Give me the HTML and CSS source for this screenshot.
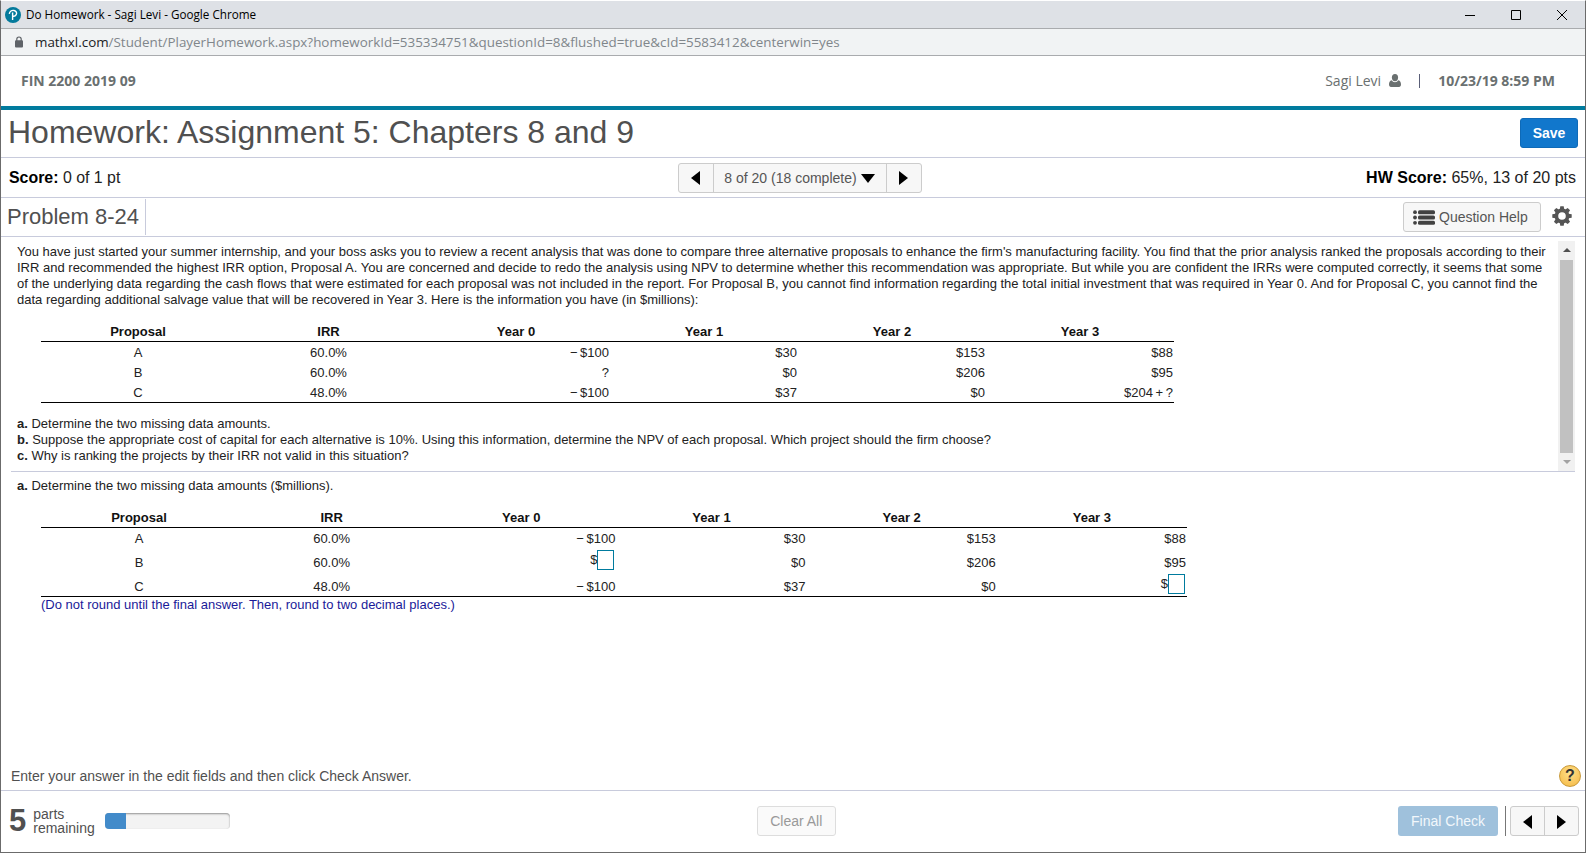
FILE: index.html
```html
<!DOCTYPE html>
<html lang="en">
<head>
  <meta charset="UTF-8">
  <meta name="viewport" content="width=device-width, initial-scale=1.0">
  <title>Do Homework - Sagi Levi</title>
  <link rel="stylesheet" href="styles.css">
</head>
<body>
  <div class="window">
    <!-- Browser chrome -->
    <div class="titlebar">
      <svg class="favicon" width="16" height="16" viewBox="0 0 16 16">
        <circle cx="8" cy="8" r="8" fill="#047a9c"/>
        <path d="M4.300 6.800C4.600 4.300 6.800 3 9 3.500c2.300.5 3.200 2.500 2.200 4.200-.9 1.500-2.700 1.800-4.200 1.100M7.600 5.500v7.500" fill="none" stroke="#fff" stroke-width="1.400"/>
      </svg>
      <span class="window-title">Do Homework - Sagi Levi - Google Chrome</span>
      <svg class="window-controls" width="104" height="12" viewBox="0 0 104 12" fill="none" stroke="#000">
        <path d="M0 6.500h10"/>
        <path d="M46.500 1.500h9v9h-9z"/>
        <path d="M92 1l10 10M102 1l-10 10"/>
      </svg>
    </div>
    <div class="addressbar">
      <svg class="lock" width="8" height="12" viewBox="0 0 8 12">
        <path d="M1.800 5V3.200a2.200 2.200 0 0 1 4.400 0V5" fill="none" stroke="#5f6368" stroke-width="1.200"/>
        <rect y="4.300" width="8" height="7.200" rx="1" fill="#5f6368"/>
      </svg>
      <span class="url"><b>mathxl.com</b>/Student/PlayerHomework.aspx?homeworkId=535334751&amp;questionId=8&amp;flushed=true&amp;cId=5583412&amp;centerwin=yes</span>
    </div>

    <!-- Course header -->
    <div class="course-header">
      <span class="course">FIN 2200 2019 09</span>
      <span class="user">Sagi Levi</span>
      <svg class="user-icon" width="12" height="13" viewBox="0 0 12 13" fill="#6a7070">
        <ellipse cx="6" cy="3.600" rx="3.100" ry="3.600"/>
        <path d="M2.600 6.200C.8 6.600 0 8.200 0 10.500 0 12 .8 13 2 13h8c1.200 0 2-1 2-2.500 0-2.300-.8-3.900-2.600-4.300C8.500 7.500 7.500 8.200 6 8.200S3.500 7.500 2.600 6.200z"/>
      </svg>
      <span class="separator"></span>
      <span class="date">10/23/19 8:59 PM</span>
    </div>

    <div class="title-row">
      <h1>Homework: Assignment 5: Chapters 8 and 9</h1>
      <button class="btn btn-primary save-btn">Save</button>
    </div>

    <div class="score-row">
      <div class="score"><b>Score:</b> 0 of 1 pt</div>
      <div class="question-nav">
        <button><svg width="9" height="14" viewBox="0 0 9 14"><path d="M9 0v14L0 7z"/></svg></button>
        <button class="question-select">8 of 20 (18 complete)<svg width="14" height="9" viewBox="0 0 14 9"><path d="M0 0h14L7 9z"/></svg></button>
        <button><svg width="9" height="14" viewBox="0 0 9 14"><path d="M0 0v14l9-7z"/></svg></button>
      </div>
      <div class="score hw-score"><b>HW Score:</b> 65%, 13 of 20 pts</div>
    </div>

    <div class="problem-row">
      <h2>Problem 8-24</h2>
      <button class="btn help-btn">
        <svg width="22" height="15" viewBox="0 0 22 15" fill="#424242">
          <circle cx="2" cy="2.200" r="1.900"/><circle cx="2" cy="7.500" r="1.900"/><circle cx="2" cy="12.800" r="1.900"/>
          <rect x="5" y=".3" width="17" height="4" rx="1.500"/><rect x="5" y="5.500" width="17" height="4" rx="1.500"/><rect x="5" y="10.700" width="17" height="4" rx="1.500"/>
        </svg>
        Question Help
      </button>
      <svg class="gear" width="20" height="20" viewBox="-10 -10 20 20">
        <g fill="#555">
          <path id="tooth" d="M-2.300-6.500-1.700-9.700h3.400L2.300-6.500z"/>
          <use href="#tooth" transform="rotate(45)"/><use href="#tooth" transform="rotate(90)"/>
          <use href="#tooth" transform="rotate(135)"/><use href="#tooth" transform="rotate(180)"/>
          <use href="#tooth" transform="rotate(225)"/><use href="#tooth" transform="rotate(270)"/>
          <use href="#tooth" transform="rotate(315)"/>
        </g>
        <circle r="5.600" fill="none" stroke="#555" stroke-width="3.600"/>
      </svg>
    </div>

    <!-- Problem statement -->
    <div class="statement">
      <div class="statement-body">
        <p>
          You have just started your summer internship, and your boss asks you to review a recent analysis that was done to compare three alternative proposals to enhance the firm's manufacturing facility. You find that the prior analysis ranked the proposals according to their<br>
          IRR and recommended the highest IRR option, Proposal A. You are concerned and decide to redo the analysis using NPV to determine whether this recommendation was appropriate. But while you are confident the IRRs were computed correctly, it seems that some<br>
          of the underlying data regarding the cash flows that were estimated for each proposal was not included in the report. For Proposal B, you cannot find information regarding the total initial investment that was required in Year 0. And for Proposal C, you cannot find the<br>
          data regarding additional salvage value that will be recovered in Year 3. Here is the information you have (in $millions):
        </p>
        <table class="data-table given">
          <thead>
            <tr><th class="first">Proposal</th><th>IRR</th><th>Year 0</th><th>Year 1</th><th>Year 2</th><th>Year 3</th></tr>
          </thead>
          <tbody>
            <tr><td>A</td><td>60.0%</td><td>&minus; $100</td><td>$30</td><td>$153</td><td>$88</td></tr>
            <tr><td>B</td><td>60.0%</td><td>?</td><td>$0</td><td>$206</td><td>$95</td></tr>
            <tr><td>C</td><td>48.0%</td><td>&minus; $100</td><td>$37</td><td>$0</td><td>$204 + ?</td></tr>
          </tbody>
        </table>
        <p>
          <b>a.</b> Determine the two missing data amounts.<br>
          <b>b.</b> Suppose the appropriate cost of capital for each alternative is 10%. Using this information, determine the NPV of each proposal. Which project should the firm choose?<br>
          <b>c.</b> Why is ranking the projects by their IRR not valid in this situation?
        </p>
      </div>
      <div class="scrollbar">
        <svg width="8" height="4" viewBox="0 0 8 4"><path d="M4 0l4 4H0z" fill="#505050"/></svg>
        <div class="thumb"></div>
        <svg width="8" height="4" viewBox="0 0 8 4"><path d="M0 0h8L4 4z" fill="#a3a3a3"/></svg>
      </div>
    </div>

    <!-- Answer area -->
    <div class="answer">
      <p><b>a.</b> Determine the two missing data amounts ($millions).</p>
      <table class="data-table entry">
        <thead>
          <tr><th class="first">Proposal</th><th>IRR</th><th>Year 0</th><th>Year 1</th><th>Year 2</th><th>Year 3</th></tr>
        </thead>
        <tbody>
          <tr><td>A</td><td>60.0%</td><td>&minus; $100</td><td>$30</td><td>$153</td><td>$88</td></tr>
          <tr><td>B</td><td>60.0%</td><td class="field-cell"><div class="field">$<input type="text"></div></td><td>$0</td><td>$206</td><td>$95</td></tr>
          <tr><td>C</td><td>48.0%</td><td>&minus; $100</td><td>$37</td><td>$0</td><td class="field-cell"><div class="field">$<input type="text"></div></td></tr>
        </tbody>
      </table>
      <p class="note">(Do not round until the final answer. Then, round to two decimal places.)</p>
    </div>

    <div class="hint">
      <span>Enter your answer in the edit fields and then click Check Answer.</span>
      <span class="help-badge">?</span>
    </div>

    <!-- Footer -->
    <div class="footer">
      <span class="count">5</span>
      <span class="remaining">parts<br>remaining</span>
      <div class="progress"><div class="progress-bar"></div></div>
      <button class="btn clear-btn">Clear All</button>
      <button class="btn final-btn">Final Check</button>
      <span class="footer-separator"></span>
      <div class="part-nav">
        <button><svg width="9" height="14" viewBox="0 0 9 14"><path d="M9 0v14L0 7z"/></svg></button>
        <button><svg width="9" height="14" viewBox="0 0 9 14"><path d="M0 0v14l9-7z"/></svg></button>
      </div>
    </div>
  </div>
</body>
</html>
```
FILE: styles.css
```css
* {
  margin: 0;
  padding: 0;
  box-sizing: border-box;
}

body {
  background: #fff;
  color: #222;
  font-family: "Liberation Sans", Arial, sans-serif;
  font-size: 13px;
  overflow: hidden;
}

.window {
  width: 1586px;
  height: 853px;
  display: flex;
  flex-direction: column;
  border: 1px solid #6b6b6b;
  border-top-color: #fff;
}

button {
  font-family: inherit;
}

/* Browser chrome */
.titlebar {
  height: 28px;
  flex: none;
  display: flex;
  align-items: center;
  padding: 0 16px 0 4px;
  background: #dee1e6;
  border-bottom: 1px solid #a9abae;
}

.window-title {
  margin: -1px 0 0 5px;
  font: 11.7px "Open Sans", sans-serif;
  color: #000;
}

.window-controls {
  margin-left: auto;
}

.addressbar {
  height: 27px;
  flex: none;
  display: flex;
  align-items: center;
  padding: 0 0 1px 14px;
  background: #f1f3f4;
  border-bottom: 1px solid #a9abae;
}

.url {
  margin-left: 12px;
  font: 13.4px "Open Sans", sans-serif;
  color: #80868b;
}

.url b {
  font-weight: 400;
  color: #202124;
}

/* Course header */
.course-header {
  height: 54px;
  flex: none;
  display: flex;
  align-items: center;
  padding: 0 30px 2px 20px;
  border-bottom: 4px solid #007b9e;
  font: 14px "Open Sans", sans-serif;
  color: #6a7070;
}

.course,
.date {
  font-weight: 700;
}

.user {
  margin-left: auto;
}

.user-icon {
  margin-left: 8px;
}

.separator {
  width: 1px;
  height: 14px;
  margin: 2px 18px 0 18px;
  background: #5a5f78;
}

/* Assignment rows */
.title-row,
.score-row,
.problem-row {
  flex: none;
  display: flex;
  border-bottom: 1px solid #c8cbdc;
}

.title-row {
  height: 48px;
  justify-content: space-between;
  padding: 8px 7px 0 7px;
}

.title-row h1 {
  font-size: 32px;
  font-weight: 400;
  line-height: 28px;
  color: #505050;
}

.btn {
  height: 30px;
  border: 1px solid #ccc;
  border-radius: 3px;
  background: #f7f7f7;
  color: #555;
  font-size: 14px;
}

.btn-primary {
  background: #1177cc;
  border-color: #0e6ab8;
  color: #fff;
}

.save-btn {
  width: 58px;
  font-weight: 700;
}

.score-row {
  height: 40px;
  align-items: center;
  padding: 0 9px 0 8px;
}

.score {
  flex: 1;
  font-size: 15.9px;
  line-height: 38px;
}

.score b {
  color: #000;
}

.hw-score {
  font-size: 16px;
  text-align: right;
}

.question-nav,
.part-nav {
  display: flex;
  height: 30px;
  border: 1px solid #ccc;
  border-radius: 3px;
  background: #f7f7f7;
}

.question-nav {
  margin-left: 14px;
}

.question-nav button,
.part-nav button {
  display: flex;
  align-items: center;
  justify-content: center;
  width: 34px;
  padding-top: 1px;
  border: none;
  background: none;
}

.question-nav .question-select {
  width: 174px;
  padding: 0;
  border: solid #ccc;
  border-width: 0 1px;
  font-size: 14px;
  color: #555;
}

.question-select svg {
  margin: 2px 0 0 4px;
}

.problem-row {
  height: 39px;
  align-items: center;
  padding-right: 13px;
}

.problem-row h2 {
  width: 145px;
  height: 36px;
  padding-left: 6px;
  border-right: 1px solid #c8cbdc;
  font-size: 22px;
  font-weight: 400;
  line-height: 35px;
  color: #505050;
}

.help-btn {
  display: flex;
  align-items: center;
  gap: 4px;
  width: 138px;
  margin-left: auto;
  padding-left: 9px;
}

.gear {
  margin: -2px 0 0 11px;
}

/* Problem statement */
.statement {
  height: 235px;
  flex: none;
  display: flex;
  margin: 0 10px;
  border-bottom: 1px solid #c8cbdc;
}

.statement-body {
  flex: 1;
  padding: 7px 0 0 6px;
}

.statement p,
.answer p {
  line-height: 16px;
  white-space: nowrap;
}

.data-table {
  table-layout: fixed;
  border-spacing: 0;
  margin-left: 24px;
}

.data-table .first {
  width: 193px;
}

.data-table th {
  height: 21px;
  border-bottom: 1px solid #000;
  color: #111;
}

.data-table td {
  height: 20px;
  padding-right: 1px;
  text-align: right;
  word-spacing: -1px;
}

.data-table th:nth-child(-n+2),
.data-table td:nth-child(-n+2) {
  padding-left: 1px;
  padding-right: 0;
  text-align: center;
}

.data-table tr:last-child td {
  height: 21px;
  border-bottom: 1px solid #000;
}

.given {
  width: 1133px;
  margin-top: 13px;
  margin-bottom: 13px;
}

.scrollbar {
  width: 17px;
  margin-top: 4px;
  display: flex;
  flex-direction: column;
  align-items: center;
  justify-content: space-between;
  padding: 7px 0;
  background: #f1f1f1;
}

.thumb {
  width: 13px;
  height: 193px;
  background: #c1c1c1;
}

/* Answer area */
.answer {
  flex: 1;
  padding: 6px 16px 0;
}

.data-table.entry {
  width: 1146px;
  margin-top: 13px;
}

.entry .first {
  width: 195px;
}

.entry tr + tr td {
  height: 24px;
  padding-top: 4px;
}

.entry tr:last-child td {
  height: 25px;
}

.entry tr + tr .field-cell {
  padding-top: 0;
}

.field {
  display: flex;
  justify-content: flex-end;
  line-height: 19px;
}

.field input {
  width: 17px;
  height: 20px;
  margin-right: 1px;
  border: 1px solid #007b9e;
}

.answer .note {
  margin-left: 24px;
  color: #1a1a99;
}

.hint {
  height: 28px;
  flex: none;
  display: flex;
  align-items: center;
  justify-content: space-between;
  padding: 0 4px 0 10px;
  font-size: 14px;
  color: #505050;
}

.help-badge {
  width: 22px;
  height: 22px;
  border: 1px solid #c99a3a;
  border-radius: 50%;
  background: radial-gradient(circle at 50% 35%, #ffe08c, #f4b73f);
  font-size: 16px;
  font-weight: 700;
  line-height: 20px;
  text-align: center;
  color: #333;
}

/* Footer */
.footer {
  height: 62px;
  flex: none;
  display: flex;
  align-items: center;
  padding: 0 6px 1px 8px;
  border-top: 1px solid #c8cbdc;
  color: #505050;
}

.count {
  font-size: 31px;
  font-weight: 700;
}

.remaining {
  margin-left: 7px;
  font-size: 14px;
  line-height: 14px;
}

.progress {
  width: 125px;
  height: 16px;
  margin-left: 10px;
  overflow: hidden;
  border-radius: 4px;
  background: #f3f3f3;
  box-shadow: inset 0 1px 2px rgba(0, 0, 0, 0.4);
}

.progress-bar {
  width: 21px;
  height: 100%;
  background: #428bca;
}

.clear-btn {
  width: 79px;
  margin-left: 527px;
  border-color: #ddd;
  background: #fafafa;
  color: #999;
}

.final-btn {
  width: 100px;
  margin-left: auto;
  border: none;
  background: #9fc1dc;
  color: #f2f7fb;
}

.footer-separator {
  width: 1px;
  height: 30px;
  margin: 0 4px 0 7px;
  background: #777;
}

.part-nav button:first-child {
  width: 33px;
}

.part-nav button:last-child {
  border-left: 1px solid #ccc;
}
```
